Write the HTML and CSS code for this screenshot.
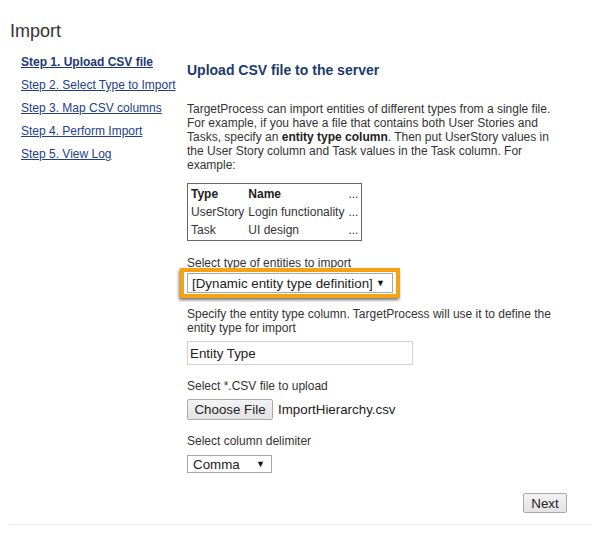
FILE: index.html
```html
<!DOCTYPE html>
<html lang="en">
<head>
<meta charset="utf-8">
<title>Import</title>
<link rel="stylesheet" href="styles.css">
</head>
<body>
<div class="page">
  <h1 class="title">Import</h1>
  <div class="layout">
    <ul class="steps">
      <li><a href="#" class="step current">Step 1. Upload CSV file</a></li>
      <li><a href="#" class="step">Step 2. Select Type to Import</a></li>
      <li><a href="#" class="step">Step 3. Map CSV columns</a></li>
      <li><a href="#" class="step">Step 4. Perform Import</a></li>
      <li><a href="#" class="step">Step 5. View Log</a></li>
    </ul>
    <div class="main">
      <h2 class="heading">Upload CSV file to the server</h2>
      <p class="intro">TargetProcess can import entities of different types from a single file. For example, if you have a file that contains both User Stories and Tasks, specify an <b>entity type column</b>. Then put UserStory values in the User Story column and Task values in the Task column. For example:</p>
      <table class="example">
        <tr><th>Type</th><th>Name</th><td>...</td></tr>
        <tr><td>UserStory</td><td>Login functionality</td><td>...</td></tr>
        <tr><td>Task</td><td>UI design</td><td>...</td></tr>
      </table>
      <div class="label label-type">Select type of entities to import</div>
      <div class="highlight">
        <span class="select-wrap select-type">
          <select class="select"><option>[Dynamic entity type definition]</option></select>
        </span>
      </div>
      <div class="label label-specify">Specify the entity type column. TargetProcess will use it to define the entity type for import</div>
      <input class="text-input" type="text" value="Entity Type">
      <div class="label label-file">Select *.CSV file to upload</div>
      <div class="file-row">
        <button class="btn btn-file" type="button">Choose File</button>
        <span class="file-name">ImportHierarchy.csv</span>
      </div>
      <div class="label label-delim">Select column delimiter</div>
      <span class="select-wrap select-delim">
        <select class="select"><option>Comma</option></select>
      </span>
      <div class="actions">
        <button class="btn btn-next" type="button">Next</button>
      </div>
    </div>
  </div>
  <div class="rule"></div>
</div>
</body>
</html>
```

FILE: styles.css
```css
html, body {
  margin: 0;
  padding: 0;
  background: #ffffff;
}

body {
  font-family: "Liberation Sans", Arial, sans-serif;
  font-size: 12px;
  line-height: 14px;
  color: #333333;
}

.page {
  padding: 21px 0 0 10px;
}

.title {
  margin: 0;
  font-size: 18px;
  line-height: 21px;
  font-weight: normal;
  color: #333333;
}

.layout {
  display: flex;
  align-items: flex-start;
}

.steps {
  list-style: none;
  margin: 9px 0 0 11px;
  padding: 0;
  width: 166px;
  flex: none;
}

.steps li {
  line-height: 23px;
}

.step {
  color: #22408a;
  text-decoration: underline;
}

.step.current {
  font-weight: bold;
  color: #1d3877;
}

.main {
  width: 380px;
  padding-top: 20px;
  display: flex;
  flex-direction: column;
  align-items: flex-start;
}

.heading {
  margin: 0;
  font-size: 14px;
  line-height: 16px;
  font-weight: bold;
  color: #1c3a6e;
}

.intro {
  margin: 24px 0 0;
}

.intro b {
  color: #222222;
}

.example {
  margin-top: 11px;
  border: 1px solid #666666;
  border-spacing: 2px;
  line-height: normal;
}

.example th,
.example td {
  padding: 1px;
  text-align: left;
  vertical-align: top;
  white-space: nowrap;
}

.example th {
  font-weight: bold;
  color: #222222;
}

.label {
  margin-top: 14px;
}

.label-type {
  margin-top: 15px;
}

.label-specify {
  margin-top: 9px;
}

.label-delim {
  margin-top: 14px;
}

.highlight {
  display: flex;
  margin: -2px 0 0 -7px;
  padding: 1px 3px 1px 3px;
  border: 4px solid #f6a313;
  box-shadow: -1px 2px 3px rgba(0, 0, 0, 0.55);
  background: #ffffff;
}

.select-wrap {
  position: relative;
  display: flex;
}

.select-wrap::after {
  content: "\25BC";
  position: absolute;
  top: 50%;
  transform: translateY(-50%);
  font-size: 9px;
  line-height: 9px;
  color: #111111;
  pointer-events: none;
}

.select {
  -webkit-appearance: none;
  appearance: none;
  margin: 0;
  box-sizing: border-box;
  border: 1px solid #a6a6a6;
  border-radius: 0;
  background: #ffffff;
  font-family: "Liberation Sans", Arial, sans-serif;
  font-size: 13.333px;
  color: #222222;
  outline: none;
}

.select-type .select {
  width: 206px;
  height: 20px;
  padding: 0 0 0 4px;
}

.select-type::after {
  right: 8px;
}

.select-delim {
  margin-top: 7px;
}

.select-delim .select {
  width: 85px;
  height: 18px;
  padding: 0 0 0 5px;
}

.select-delim::after {
  right: 7px;
}

.text-input {
  margin: 6px 0 0;
  box-sizing: border-box;
  width: 226px;
  height: 24px;
  padding: 0 2px;
  border: 1px solid #d3d3d3;
  font-family: "Liberation Sans", Arial, sans-serif;
  font-size: 13.333px;
  color: #222222;
  outline: none;
}

.file-row {
  margin-top: 6px;
  display: flex;
  align-items: center;
  gap: 5px;
}

.btn {
  box-sizing: border-box;
  margin: 0;
  padding: 0;
  border: 1px solid #a9a9a9;
  border-radius: 2px;
  background: linear-gradient(#f3f3f3, #e2e2e2);
  font-family: "Liberation Sans", Arial, sans-serif;
  font-size: 13.333px;
  color: #222222;
}

.btn-file {
  width: 86px;
  height: 21px;
}

.file-name {
  font-size: 13.333px;
  color: #222222;
}

.actions {
  align-self: stretch;
  display: flex;
  justify-content: flex-end;
  margin-top: 20px;
}

.btn-next {
  width: 44px;
  height: 20px;
}

.rule {
  margin: 11px 0 0 -1px;
  height: 1px;
  background: #ebebeb;
}
```
